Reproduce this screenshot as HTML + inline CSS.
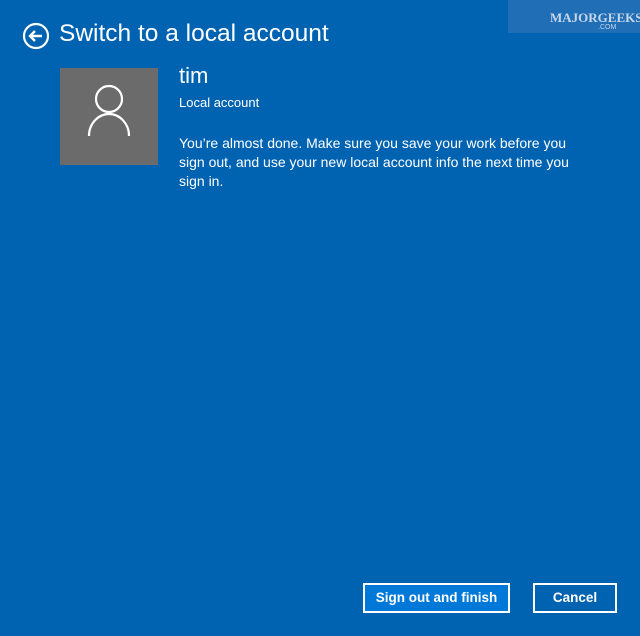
<!DOCTYPE html>
<html><head><style>
body{margin:0;width:640px;height:636px;background:#0063b1;font-family:"Liberation Sans",sans-serif;color:#fff;position:relative;overflow:hidden}
.a{position:absolute}
.btn{position:absolute;top:583px;height:26px;border:2px solid #fff;box-sizing:content-box;font-size:13.5px;font-weight:bold;text-align:center;line-height:26px}
</style></head><body>
<div class="a" style="left:508px;top:0;width:132px;height:33px;background:#3a78b8;opacity:.55"></div>
<div class="a" style="left:550px;top:10px;font-size:13px;font-family:'Liberation Serif',serif;font-weight:bold;color:#c8d6ea">MAJORGEEKS</div>
<div class="a" style="left:598px;top:24px;font-size:7px;color:#c8d6ea">.COM</div>
<svg class="a" style="left:22px;top:22px" width="28" height="28" viewBox="0 0 28 28"><circle cx="14" cy="14" r="12" fill="none" stroke="#fff" stroke-width="2.2"/><path d="M20 14H8M13 9l-5 5 5 5" fill="none" stroke="#fff" stroke-width="2.4"/></svg>
<div class="a" style="left:59px;top:20px;font-size:24.5px">Switch to a local account</div>
<div class="a" style="left:60px;top:68px;width:98px;height:97px;background:#6b6b6b"></div>
<svg class="a" style="left:60px;top:68px" width="98" height="97" viewBox="0 0 98 97"><circle cx="49" cy="31" r="13" fill="none" stroke="#fff" stroke-width="2.2"/><path d="M29 68a20 22 0 0 1 40 0" fill="none" stroke="#fff" stroke-width="2.2"/></svg>
<div class="a" style="left:179px;top:63px;font-size:22px">tim</div>
<div class="a" style="left:179px;top:95px;font-size:13px">Local account</div>
<div class="a" style="left:179px;top:134px;font-size:14px;line-height:19px;width:440px">You’re almost done. Make sure you save your work before you<br>sign out, and use your new local account info the next time you<br>sign in.</div>
<div class="btn" style="left:363px;width:143px;background:#0078d7">Sign out and finish</div>
<div class="btn" style="left:533px;width:80px">Cancel</div>
</body></html>
